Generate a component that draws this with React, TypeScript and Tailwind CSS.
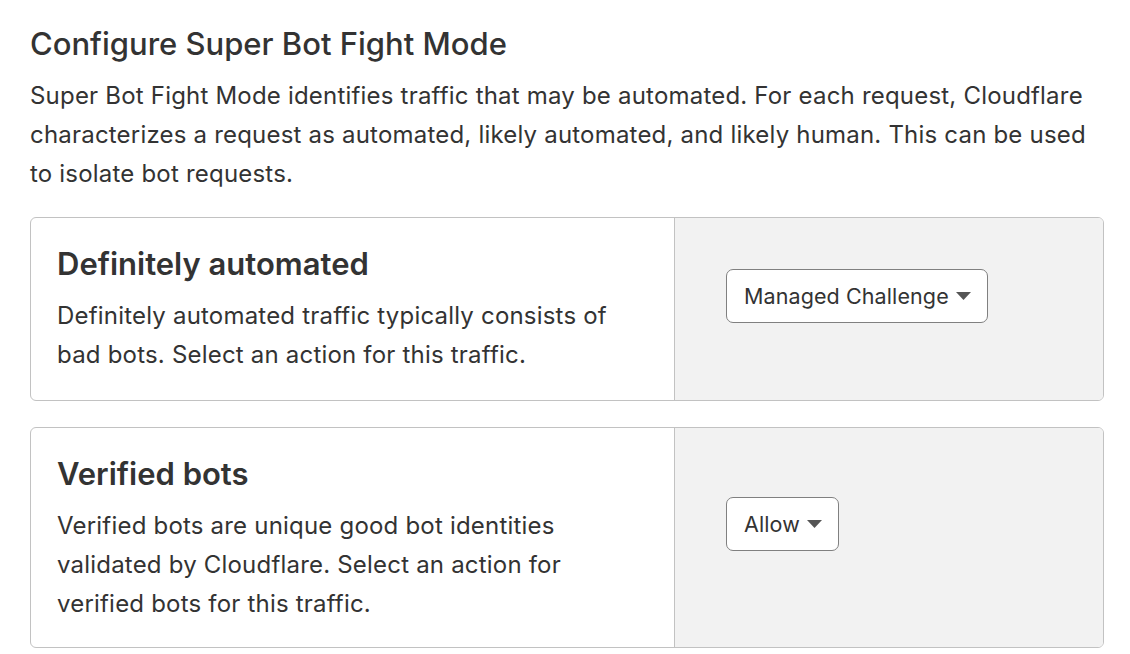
import React from "react";

const Caret = () => (
  <svg width="15" height="8" viewBox="0 0 15 8" className="ml-[7px] shrink-0">
    <path d="M0 0 L15 0 L7.5 8 Z" fill="#555" />
  </svg>
);

const Select = ({ label }: { label: string }) => (
  <button
    type="button"
    className="flex items-center h-[54px] pl-[17px] pr-[16px] bg-white border border-[#808080] rounded-[7px] text-[21.5px] tracking-[0.1px] text-[#333]"
  >
    {label}
    <Caret />
  </button>
);

const RuleCard = ({
  title,
  desc,
  action,
  height,
  btnTop,
}: {
  title: string;
  desc: string;
  action: string;
  height: string;
  btnTop: string;
}) => (
  <div className={`flex border border-[#c2c2c2] rounded-[6px] overflow-hidden ${height}`}>
    <div className="w-[644px] shrink-0 pl-[26px] pr-[40px] pt-[26px] border-r border-[#c2c2c2]">
      <h3 className="text-[31px] font-semibold text-[#333] leading-[40px]">{title}</h3>
      <p className="mt-[12px] text-[24px] tracking-[0.2px] leading-[39px] text-[#333]">{desc}</p>
    </div>
    <div className={`flex-1 bg-[#f2f2f2] pl-[51px] ${btnTop}`}>
      <div className="inline-block">
        <Select label={action} />
      </div>
    </div>
  </div>
);

export default function App() {
  return (
    <div
      className="w-[1130px] h-[654px] bg-white px-[30px] pt-[26px] overflow-hidden"
      style={{ fontFamily: "Inter, 'Noto Sans', sans-serif" }}
    >
      <h2 className="text-[31px] font-medium text-[#333] leading-[36px]">Configure Super Bot Fight Mode</h2>
      <p className="mt-[14px] text-[24px] tracking-[0.2px] leading-[39px] text-[#333]">
        Super Bot Fight Mode identifies traffic that may be automated. For each request, Cloudflare
        characterizes a request as automated, likely automated, and likely human. This can be used
        to isolate bot requests.
      </p>
      <div className="mt-[24px] w-[1074px] flex flex-col gap-[26px]">
        <RuleCard
          title="Definitely automated"
          desc="Definitely automated traffic typically consists of bad bots. Select an action for this traffic."
          action="Managed Challenge"
          height="h-[184px]"
          btnTop="pt-[51px]"
        />
        <RuleCard
          title="Verified bots"
          desc="Verified bots are unique good bot identities validated by Cloudflare. Select an action for verified bots for this traffic."
          action="Allow"
          height="h-[221px]"
          btnTop="pt-[69px]"
        />
      </div>
    </div>
  );
}
